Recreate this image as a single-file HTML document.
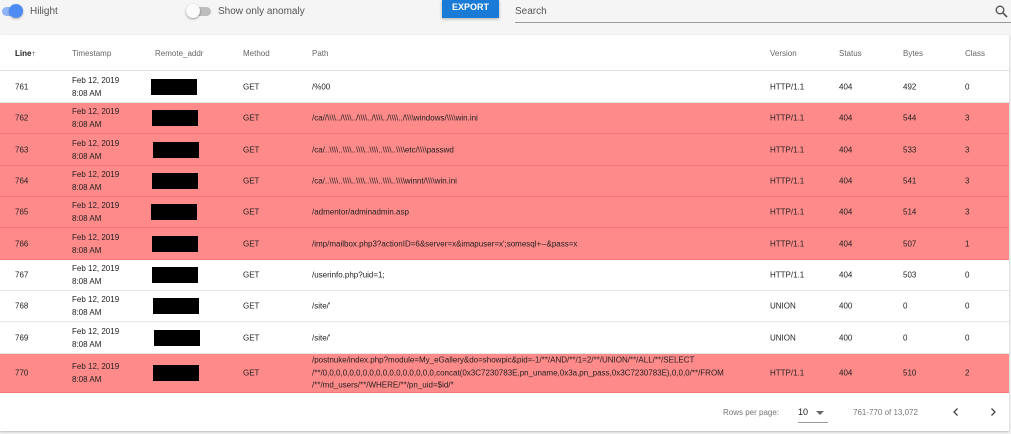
<!DOCTYPE html>
<html><head><style>
*{margin:0;padding:0;box-sizing:border-box}
body{width:1011px;height:434px;background:#f5f5f5;font-family:"Liberation Sans",Arial,sans-serif;position:relative;overflow:hidden;color:#222}
.a{position:absolute}
.card{position:absolute;left:0;top:35px;width:1009px;height:396px;background:#fff;box-shadow:0 1px 2px rgba(0,0,0,.25)}
.hd{position:absolute;top:0;left:0;right:0;height:36px;border-bottom:1px solid #e0e0e0;font-size:8px;color:#666}
.hd span{position:absolute;top:14px}
.r{position:absolute;left:0;right:0;border-bottom:1px solid #e6e6e6;font-size:8px;color:#222}
.r.p{background:#ff8a8a;border-bottom-color:#f07a7a}
.r span{position:absolute}
.c{top:50%;transform:translateY(-50%)}
.ts{top:50%;transform:translateY(-50%);line-height:13px}
.bx{background:#000;height:16px;width:46px;top:50%;transform:translateY(-50%)}
</style></head><body>
<div class="a" style="left:2px;top:7px;width:20px;height:9px;border-radius:5px;background:#8fb4f7"></div>
<div class="a" style="left:9px;top:4px;width:14px;height:14px;border-radius:7px;background:#4d8cf5;box-shadow:0 1px 2px rgba(0,0,0,.3)"></div>
<div class="a" style="left:30px;top:6px;font-size:10px;color:#555">Hilight</div>
<div class="a" style="left:189px;top:7px;width:22px;height:9px;border-radius:5px;background:#bdbdbd"></div>
<div class="a" style="left:186px;top:4px;width:14px;height:14px;border-radius:7px;background:#fafafa;box-shadow:0 1px 2px rgba(0,0,0,.4)"></div>
<div class="a" style="left:218px;top:6px;font-size:10px;color:#555">Show only anomaly</div>
<div class="a" style="left:442px;top:0;width:57px;height:18px;background:#1a7bd6;color:#fff;font-size:9px;font-weight:bold;text-align:center;line-height:14px;box-shadow:0 1px 3px rgba(0,0,0,.3)">EXPORT</div>
<div class="a" style="left:515px;top:6px;font-size:10px;color:#555">Search</div>
<div class="a" style="left:515px;top:22px;width:496px;height:1px;background:#999"></div>
<svg class="a" style="left:995px;top:5px" width="13" height="13" viewBox="0 0 13 13"><circle cx="5" cy="5" r="3.8" fill="none" stroke="#555" stroke-width="1.4"/><path d="M8 8l4 4" stroke="#555" stroke-width="1.6"/></svg>
<div class="card">
<div class="hd"><span style="left:15px;color:#222;font-weight:bold">Line&#8593;</span><span style="left:72px">Timestamp</span><span style="left:155px">Remote_addr</span><span style="left:243px">Method</span><span style="left:312px">Path</span><span style="left:770px">Version</span><span style="left:839px">Status</span><span style="left:903px">Bytes</span><span style="left:965px">Class</span></div>

<div class="r" style="top:37px;height:31px"><span class="c" style="left:15px">761</span><span class="ts" style="left:72px">Feb 12, 2019<br>8:08 AM</span><span class="bx" style="left:151px"></span><span class="c" style="left:243px">GET</span><span class="c" style="left:312px">/%00</span><span class="c" style="left:770px">HTTP/1.1</span><span class="c" style="left:839px">404</span><span class="c" style="left:903px">492</span><span class="c" style="left:965px">0</span></div>
<div class="r p" style="top:68px;height:31px"><span class="c" style="left:15px">762</span><span class="ts" style="left:72px">Feb 12, 2019<br>8:08 AM</span><span class="bx" style="left:152px"></span><span class="c" style="left:243px">GET</span><span class="c" style="left:312px">/ca//\\\\../\\\\../\\\\../\\\\../\\\\../\\\\windows/\\\\win.ini</span><span class="c" style="left:770px">HTTP/1.1</span><span class="c" style="left:839px">404</span><span class="c" style="left:903px">544</span><span class="c" style="left:965px">3</span></div>
<div class="r p" style="top:99px;height:32px"><span class="c" style="left:15px">763</span><span class="ts" style="left:72px">Feb 12, 2019<br>8:08 AM</span><span class="bx" style="left:153px"></span><span class="c" style="left:243px">GET</span><span class="c" style="left:312px">/ca/..\\\\..\\\\..\\\\..\\\\..\\\\..\\\\etc/\\\\passwd</span><span class="c" style="left:770px">HTTP/1.1</span><span class="c" style="left:839px">404</span><span class="c" style="left:903px">533</span><span class="c" style="left:965px">3</span></div>
<div class="r p" style="top:131px;height:31px"><span class="c" style="left:15px">764</span><span class="ts" style="left:72px">Feb 12, 2019<br>8:08 AM</span><span class="bx" style="left:152px"></span><span class="c" style="left:243px">GET</span><span class="c" style="left:312px">/ca/..\\\\..\\\\..\\\\..\\\\..\\\\..\\\\winnt/\\\\win.ini</span><span class="c" style="left:770px">HTTP/1.1</span><span class="c" style="left:839px">404</span><span class="c" style="left:903px">541</span><span class="c" style="left:965px">3</span></div>
<div class="r p" style="top:162px;height:31px"><span class="c" style="left:15px">765</span><span class="ts" style="left:72px">Feb 12, 2019<br>8:08 AM</span><span class="bx" style="left:151px"></span><span class="c" style="left:243px">GET</span><span class="c" style="left:312px">/admentor/adminadmin.asp</span><span class="c" style="left:770px">HTTP/1.1</span><span class="c" style="left:839px">404</span><span class="c" style="left:903px">514</span><span class="c" style="left:965px">3</span></div>
<div class="r p" style="top:193px;height:32px"><span class="c" style="left:15px">766</span><span class="ts" style="left:72px">Feb 12, 2019<br>8:08 AM</span><span class="bx" style="left:152px"></span><span class="c" style="left:243px">GET</span><span class="c" style="left:312px">/imp/mailbox.php3?actionID=6&amp;server=x&amp;imapuser=x';somesql+--&amp;pass=x</span><span class="c" style="left:770px">HTTP/1.1</span><span class="c" style="left:839px">404</span><span class="c" style="left:903px">507</span><span class="c" style="left:965px">1</span></div>
<div class="r" style="top:225px;height:31px"><span class="c" style="left:15px">767</span><span class="ts" style="left:72px">Feb 12, 2019<br>8:08 AM</span><span class="bx" style="left:152px"></span><span class="c" style="left:243px">GET</span><span class="c" style="left:312px">/userinfo.php?uid=1;</span><span class="c" style="left:770px">HTTP/1.1</span><span class="c" style="left:839px">404</span><span class="c" style="left:903px">503</span><span class="c" style="left:965px">0</span></div>
<div class="r" style="top:256px;height:31px"><span class="c" style="left:15px">768</span><span class="ts" style="left:72px">Feb 12, 2019<br>8:08 AM</span><span class="bx" style="left:153px"></span><span class="c" style="left:243px">GET</span><span class="c" style="left:312px">/site/'</span><span class="c" style="left:770px">UNION</span><span class="c" style="left:839px">400</span><span class="c" style="left:903px">0</span><span class="c" style="left:965px">0</span></div>
<div class="r" style="top:287px;height:32px"><span class="c" style="left:15px">769</span><span class="ts" style="left:72px">Feb 12, 2019<br>8:08 AM</span><span class="bx" style="left:154px"></span><span class="c" style="left:243px">GET</span><span class="c" style="left:312px">/site/'</span><span class="c" style="left:770px">UNION</span><span class="c" style="left:839px">400</span><span class="c" style="left:903px">0</span><span class="c" style="left:965px">0</span></div>
<div class="r p" style="top:319px;height:39px"><span class="c" style="left:15px">770</span><span class="ts" style="left:72px">Feb 12, 2019<br>8:08 AM</span><span class="bx" style="left:153px"></span><span class="c" style="left:243px">GET</span><span class="ts" style="left:312px;line-height:12.5px;white-space:nowrap">/postnuke/index.php?module=My_eGallery&amp;do=showpic&amp;pid=-1/**/AND/**/1=2/**/UNION/**/ALL/**/SELECT<br>/**/0,0,0,0,0,0,0,0,0,0,0,0,0,0,0,0,0,concat(0x3C7230783E,pn_uname,0x3a,pn_pass,0x3C7230783E),0,0,0/**/FROM<br>/**/md_users/**/WHERE/**/pn_uid=$id/*</span><span class="c" style="left:770px">HTTP/1.1</span><span class="c" style="left:839px">404</span><span class="c" style="left:903px">510</span><span class="c" style="left:965px">2</span></div>

<div class="a" style="left:723px;top:373px;font-size:8px;color:#777">Rows per page:</div>
<div class="a" style="left:798px;top:372px;font-size:9px;color:#222">10</div>
<div class="a" style="left:816px;top:376px;width:0;height:0;border-left:4px solid transparent;border-right:4px solid transparent;border-top:4px solid #666"></div>
<div class="a" style="left:798px;top:387px;width:30px;height:1px;background:#999"></div>
<div class="a" style="left:853px;top:373px;font-size:8px;color:#777">761-770 of 13,072</div>
<svg class="a" style="left:951px;top:372px" width="10" height="10" viewBox="0 0 10 10"><path d="M6.5 1.5L3 5l3.5 3.5" fill="none" stroke="#444" stroke-width="1.3"/></svg>
<svg class="a" style="left:988px;top:372px" width="10" height="10" viewBox="0 0 10 10"><path d="M3.5 1.5L7 5 3.5 8.5" fill="none" stroke="#444" stroke-width="1.3"/></svg>
</div>
</body></html>
